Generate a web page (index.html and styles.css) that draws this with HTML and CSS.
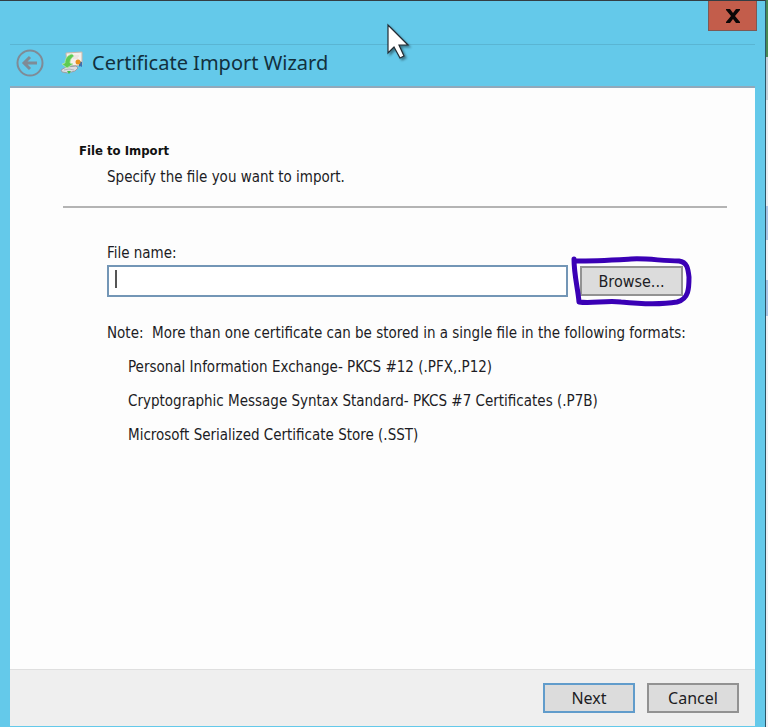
FILE: index.html
```html
<!DOCTYPE html>
<html lang="en">
<head>
    <meta charset="UTF-8">
    <meta name="viewport" content="width=device-width, initial-scale=1.0">
    <title>Certificate Import Wizard</title>
    <link rel="stylesheet" href="styles.css">
</head>
<body>
    <div class="window">
        <div class="titlebar">
            <button type="button" class="close" aria-label="Close">
                <svg width="16" height="14" viewBox="0 0 16 14"><path d="M1 0h4l3 4 3-4h4v1l-5 6 5 6v1h-4l-3-4-3 4H1v-1l5-6-5-6z" fill="#0c0808"/></svg>
            </button>
        </div>

        <header class="header">
            <button type="button" class="back" aria-label="Back">
                <svg width="28" height="28" viewBox="0 0 28 28" fill="none" stroke="#7f8b96">
                    <circle cx="14" cy="14" r="12.500" stroke-width="2"/>
                    <path d="M21 14H9M14 8l-6 6 6 6" stroke-width="3"/>
                </svg>
            </button>
            <svg class="cert-icon" width="24" height="24" viewBox="0 0 24 24">
                <path d="M6 2l16-1v13l-15 1z" fill="#f6efea" stroke="#cbb9ab"/>
                <path d="M12 5h7M13 7h5" stroke="#e2dad6"/>
                <path d="M19 10l3 1v5l-2-1-1 1z" fill="#3e6fae"/>
                <circle cx="18" cy="11" r="2.500" fill="#e8921e"/>
                <path d="M1 19l5-3 10-1 2 2-3 3-7 2-6-1z" fill="#dcdcdf" stroke="#98a0a8"/>
                <path d="M4 19l5-1 5 1" stroke="#b3b7bb" fill="none"/>
                <path d="M12 3c-4 1-7 4-7 9l-3 1 5 4 6-4-3-1c0-3 1-5 4-7z" fill="#5ecb52" stroke="#b5eaa9" stroke-width=".8"/>
                <path d="M7 20h4l-2 3z" fill="#3fc246"/>
            </svg>
            <h1 class="title">Certificate Import Wizard</h1>
        </header>

        <form class="wizard">
            <main class="page">
                <div class="intro">
                    <h2 class="heading">File to Import</h2>
                    <p class="subheading">Specify the file you want to import.</p>
                </div>

                <div class="fields">
                    <label for="filename">File name:</label>
                    <div class="file-row">
                        <div class="file-box">
                            <input type="text" id="filename" name="filename">
                            <span class="caret"></span>
                        </div>
                        <div class="browse-wrap">
                            <button type="button" class="btn browse">Browse...</button>
                            <svg class="marker" width="122" height="52" viewBox="0 0 122 52" fill="none" stroke="#3a00b5" stroke-width="5" stroke-linecap="round" stroke-linejoin="round">
                                <path d="M3 3c0 16 4 30 5 43 13 2 27-2 42 0 20 2 38 3 56 0 12-3 12-14 12-25-1-9-2-15-10-16-17 0-32-3-48-2C41 4 23 5 5 5"/>
                            </svg>
                        </div>
                    </div>

                    <p class="note">Note:&nbsp; More than one certificate can be stored in a single file in the following formats:</p>
                    <ul class="formats">
                        <li>Personal Information Exchange- PKCS #12 (.PFX,.P12)</li>
                        <li>Cryptographic Message Syntax Standard- PKCS #7 Certificates (.P7B)</li>
                        <li>Microsoft Serialized Certificate Store (.SST)</li>
                    </ul>
                </div>
            </main>

            <footer class="footer">
                <button type="submit" class="btn next">Next</button>
                <button type="button" class="btn">Cancel</button>
            </footer>
        </form>
    </div>

    <div class="behind"></div>

    <svg class="cursor" width="26" height="40" viewBox="0 0 26 40">
        <path d="M2 2v28l6-6 6 11 4-2-5-11h9z" fill="#fff" stroke="#222b33" stroke-width="1.200"/>
    </svg>
</body>
</html>
```
FILE: styles.css
```css
* {
    box-sizing: border-box;
}
body {
    display: flex;
    min-height: 100vh;
    margin: 0;
    font-family: "DejaVu Sans Condensed", "Noto Sans", sans-serif;
    font-size: 15px;
    line-height: 20px;
    color: #1c1c24;
}
h1, h2, p, ul {
    margin: 0;
    padding: 0;
}
button {
    font-family: inherit;
    font-size: 16px;
    color: inherit;
    padding: 0;
}

/* window frame */
.window {
    flex: 1;
    display: flex;
    flex-direction: column;
    padding: 0 10px 1px;
    background: #64c9ea;
    border-top: 1px solid #333d43;
    border-right: 1px solid #2b5566;
}
.titlebar {
    display: flex;
    justify-content: flex-end;
    height: 43px;
    margin-right: -2px;
}
.close {
    display: flex;
    align-items: center;
    justify-content: center;
    width: 49px;
    height: 30px;
    background: #c35d4b;
    border: 1px solid #7d5955;
    border-top: none;
}
.header {
    display: flex;
    align-items: center;
    height: 44px;
    padding: 0 6px 5px;
    border-top: 1px solid #5ab5d3;
    border-bottom: 2px solid #91a9bb;
}
.back {
    display: flex;
    border: none;
    background: none;
}
.cert-icon {
    margin: 0 8px 0 16px;
}
.title {
    font-family: "Noto Sans", sans-serif;
    font-size: 20px;
    font-weight: 400;
    line-height: 28px;
    color: #12303d;
}

/* wizard page */
.wizard {
    flex: 1;
    display: flex;
    flex-direction: column;
}
.page {
    flex: 1;
    padding: 53px 28px 24px 53px;
    background: #fdfdfd;
}
.intro {
    padding: 0 0 19px 16px;
    border-bottom: 2px solid #b4b4b4;
}
.heading {
    font-size: 13px;
    line-height: 20px;
    color: #111;
}
.subheading {
    margin-top: 6px;
    padding-left: 28px;
}
.fields {
    padding: 35px 0 0 44px;
}
.file-row {
    display: flex;
    align-items: center;
    gap: 12px;
    margin: 2px 44px 0 0;
}
.file-box {
    position: relative;
    flex: 1;
}
.file-box input {
    display: block;
    width: 100%;
    height: 32px;
    padding: 0 8px;
    font: inherit;
    background: #fff;
    border: 2px solid #7396b6;
    outline: none;
}
.caret {
    position: absolute;
    left: 8px;
    top: 5px;
    width: 2px;
    height: 18px;
    background: #555;
}
.btn {
    width: 92px;
    height: 30px;
    background: #dcdcdc;
    border: 2px solid #929292;
}
.browse-wrap {
    position: relative;
}
.browse {
    display: block;
    width: 103px;
}
.marker {
    position: absolute;
    left: -9px;
    top: -10px;
    pointer-events: none;
}
.note {
    margin-top: 26px;
}
.formats {
    display: grid;
    gap: 14px;
    margin-top: 14px;
    padding-left: 21px;
    list-style: none;
}
.footer {
    display: flex;
    justify-content: flex-end;
    gap: 12px;
    padding: 13px 16px;
    background: #efefef;
    border-top: 1px solid #dfdfdf;
}
.footer .btn {
    font-family: "Noto Sans", sans-serif;
}
.next {
    border-color: #619ccb;
}

/* edge of the window underneath */
.behind {
    width: 2px;
    background: linear-gradient(#4a8a55 57px, #c4d0da 57px, #c4d0da 100px, #e9edf2 100px, #e9edf2 206px, #a9c4e6 206px, #a9c4e6 240px, #f0f0f4 240px, #f0f0f4 280px, #a9c4e6 280px, #a9c4e6 316px, #f0f0f4 316px);
}
.cursor {
    position: absolute;
    left: 386px;
    top: 23px;
    filter: drop-shadow(2px 2px 1px rgba(0, 0, 0, 0.4));
}
```
